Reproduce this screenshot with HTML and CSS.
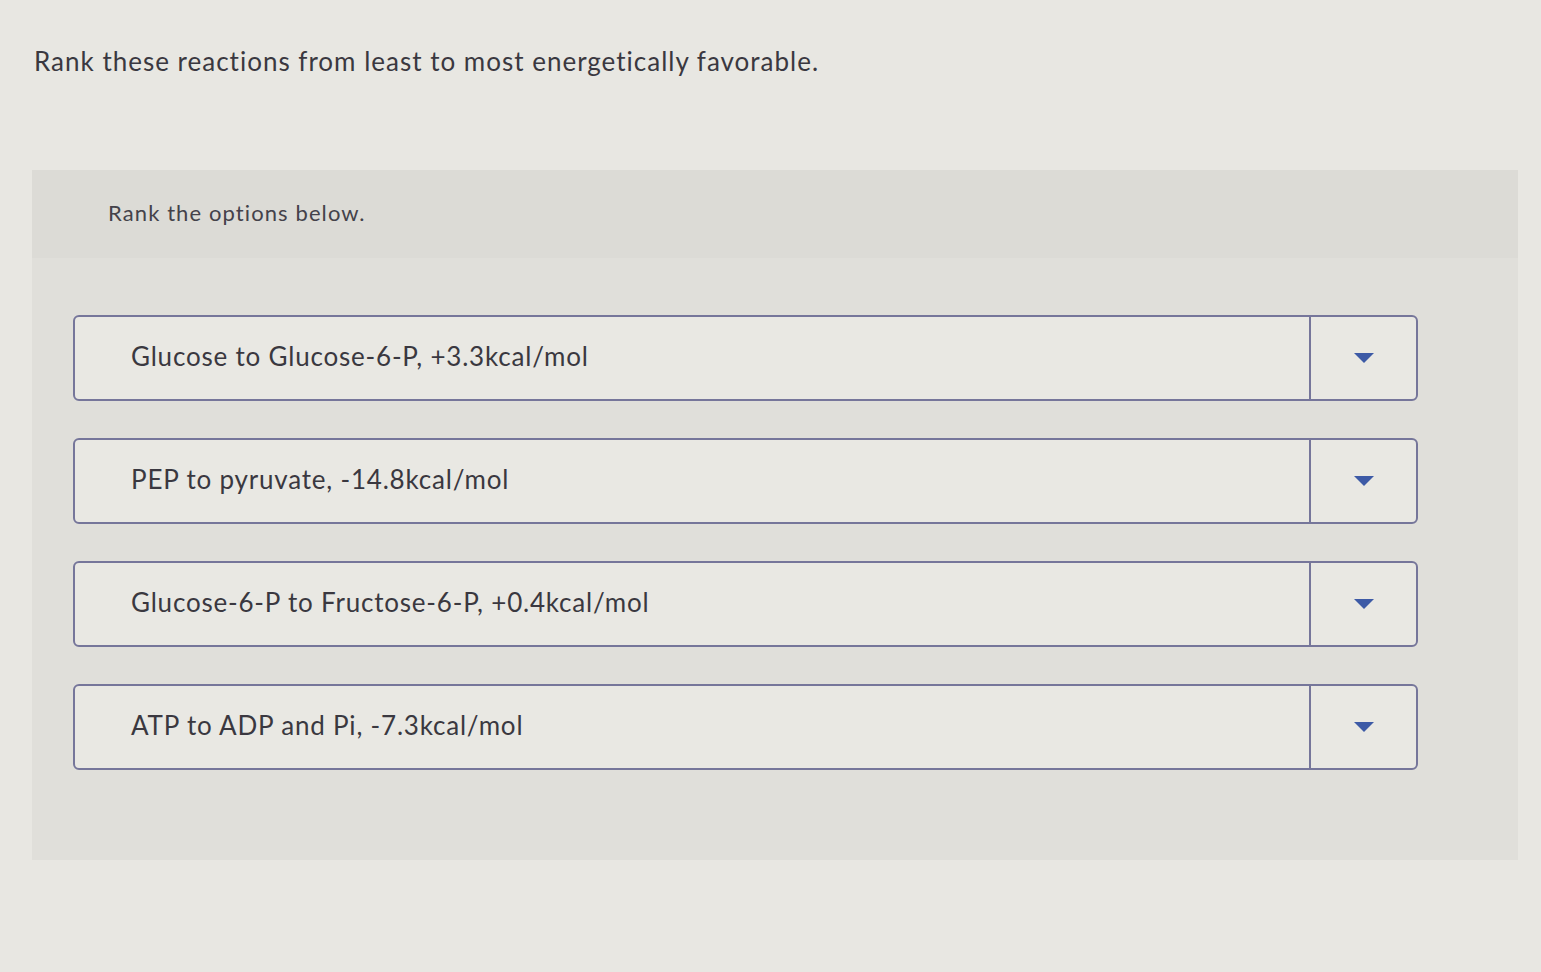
FILE: index.html
```html
<!DOCTYPE html>
<html>
<head>
<meta charset="utf-8">
<link rel="stylesheet" href="styles.css">
</head>
<body>
<div class="page">
  <h1 class="prompt">Rank these reactions from least to most energetically favorable.</h1>
  <section class="panel">
    <div class="panel-head">Rank the options below.</div>
    <div class="panel-body">
      <div class="rank-row">
        <div class="rank-label">Glucose to Glucose-6-P, +3.3kcal/mol</div>
        <div class="rank-select"><span class="caret"></span></div>
      </div>
      <div class="rank-row">
        <div class="rank-label">PEP to pyruvate, -14.8kcal/mol</div>
        <div class="rank-select"><span class="caret"></span></div>
      </div>
      <div class="rank-row">
        <div class="rank-label">Glucose-6-P to Fructose-6-P, +0.4kcal/mol</div>
        <div class="rank-select"><span class="caret"></span></div>
      </div>
      <div class="rank-row">
        <div class="rank-label">ATP to ADP and Pi, -7.3kcal/mol</div>
        <div class="rank-select"><span class="caret"></span></div>
      </div>
    </div>
  </section>
</div>
</body>
</html>
```
FILE: styles.css
```css
html, body {
  margin: 0;
  padding: 0;
}
body {
  background: #e8e7e2;
  font-family: Lato, "Liberation Sans", sans-serif;
  color: #3b3940;
  width: 1541px;
  height: 972px;
  overflow: hidden;
}
.page {
  padding: 45px 0 0 34px;
}
.prompt {
  margin: 0;
  font-size: 26px;
  letter-spacing: 1px;
  line-height: 32px;
  font-weight: 400;
  color: #3a3840;
}
.panel {
  margin: 93px 0 0 -2px;
  width: 1486px;
  background: #e0dfda;
}
.panel-head {
  height: 88px;
  box-sizing: border-box;
  padding: 29px 0 0 76px;
  font-size: 22px;
  letter-spacing: 1.1px;
  line-height: 28px;
  color: #44424a;
  background: #dcdbd6;
}
.panel-body {
  padding: 57px 100px 90px 41px;
  display: flex;
  flex-direction: column;
  gap: 37px;
}
.rank-row {
  display: flex;
  height: 86px;
  box-sizing: border-box;
  border: 2px solid #76769a;
  border-radius: 6px;
  background: #e9e8e3;
}
.rank-label {
  flex: 1;
  display: flex;
  align-items: center;
  padding-left: 56px;
  padding-bottom: 5px;
  font-size: 26px;
  letter-spacing: 0.8px;
  color: #3a3840;
}
.rank-select {
  width: 105px;
  border-left: 2px solid #76769a;
  display: flex;
  align-items: center;
  justify-content: center;
}
.caret {
  width: 0;
  height: 0;
  border-left: 10px solid transparent;
  border-right: 10px solid transparent;
  border-top: 10px solid #3d5aa6;
}
```
